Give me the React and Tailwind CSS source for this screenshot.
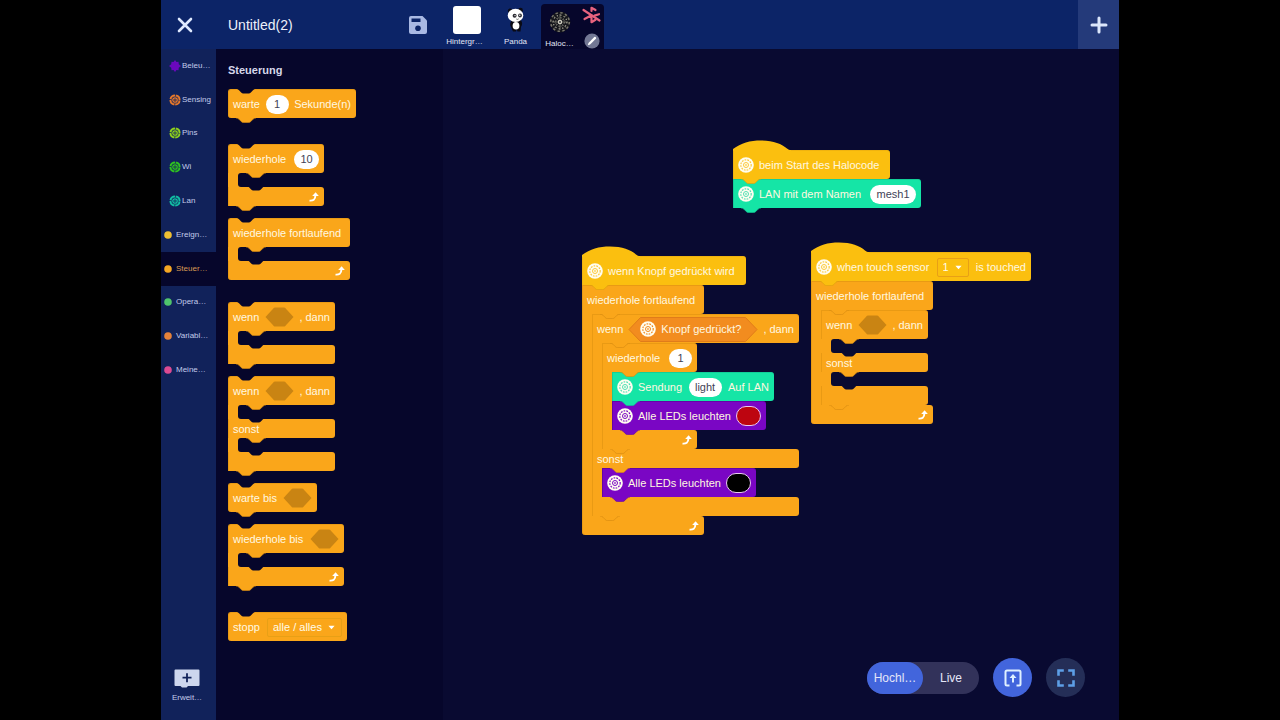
const TONES = {
  control: { bg: "bg-[#faa61a]", border: "border-[#e99a14]", fill: "fill-[#faa61a]", line: "stroke-[#d98d12]", ink: "stroke-[#faa61a]" },
  event: { bg: "bg-[#fbbf0f]", border: "border-[#f0b30f]", fill: "fill-[#fbbf0f]", line: "stroke-[#dca00f]", ink: "stroke-[#fbc93c]" },
  lan: { bg: "bg-[#15e5a6]", border: "border-[#12cf98]", fill: "fill-[#15e5a6]", line: "stroke-[#12c793]", ink: "stroke-[#4fe0b4]" },
  light: { bg: "bg-[#7a06c4]", border: "border-[#6504a6]", fill: "fill-[#7a06c4]", line: "stroke-[#6504a6]", ink: "stroke-[#7a06c4]" },
  sensing: { ink: "stroke-[#f08a1f]" },
};

const CATEGORIES = [
  { label: "Beleu…", icon: "light" },
  { label: "Sensing", icon: "chip", color: "#e8792b" },
  { label: "Pins", icon: "chip", color: "#8fd31c" },
  { label: "Wi", icon: "chip", color: "#2fc41f" },
  { label: "Lan", icon: "chip", color: "#12bfa4" },
  { label: "Ereign…", color: "#efbf32" },
  { label: "Steuer…", color: "#f5a623", active: true },
  { label: "Opera…", color: "#4fc46c" },
  { label: "Variabl…", color: "#e5823a" },
  { label: "Meine…", color: "#dc4a92" },
];

/* ---------- block parts ---------- */

const NOTCH = "M0 0C1.4 0 2.2 0.4 3 1.2L5.2 3.5C6 4.3 6.6 4.6 7.6 4.6H12.4C13.4 4.6 14 4.3 14.8 3.5L17 1.2C17.8 0.4 18.6 0 20 0";

function Bump({ tone, inner }) {
  const t = TONES[tone];
  return (
    <svg
      viewBox="0 0 20 5"
      className={`absolute top-full z-10 h-[5px] w-[20px] ${inner ? "left-[17px]" : "left-[7px]"}`}
      aria-hidden="true"
    >
      <path d={NOTCH} className={`${t.fill} ${t.line}`} strokeWidth="0.7" />
    </svg>
  );
}

function Notch({ inner, dark }) {
  return (
    <svg
      viewBox="0 0 20 5"
      className={`absolute -top-px h-[5px] w-[20px] ${dark ? "fill-[#06062b]" : "fill-[#090a31]"} ${inner ? "left-[17px]" : "left-[7px]"}`}
      aria-hidden="true"
    >
      <path d={NOTCH} />
    </svg>
  );
}

function Hat() {
  return (
    <svg viewBox="0 0 58 11" className="absolute bottom-full -left-px h-[11px] w-[58px] fill-[#fbbf0f]" aria-hidden="true">
      <path d="M0 11V9C8 3 17 0.5 28 0.5C40 0.5 49 4 54 8.5C55.5 10 56.5 10 58 10V11Z" />
    </svg>
  );
}

function LoopArrow() {
  return (
    <svg viewBox="0 0 10 10" className="size-[10px]" aria-hidden="true">
      <path d="M0.5 8.6C4 8.9 6.4 7.6 6.4 3.6" fill="none" stroke="#fff" strokeWidth="1.9" />
      <path d="M3.2 4L6.6 0.2L9.8 4Z" fill="#fff" />
    </svg>
  );
}

function ChipIcon({ tone }) {
  const ink = TONES[tone].ink;
  return (
    <svg viewBox="0 0 16 16" className="size-[16px] shrink-0" fill="none" aria-hidden="true">
      <circle cx="8" cy="8" r="7.8" fill="#fffdf0" />
      <circle cx="8" cy="8" r="5.2" className={ink} strokeWidth="1.2" strokeDasharray="1.7 1.1" />
      <circle cx="8" cy="8" r="2.5" className={ink} strokeWidth="1" />
      <circle cx="8" cy="8" r="0.6" className={ink} strokeWidth="0.8" />
    </svg>
  );
}

function Titled({ tone, children }) {
  return (
    <span className="flex items-center gap-[5px]">
      <ChipIcon tone={tone} />
      {children}
    </span>
  );
}

function Head({ tone = "control", w, hat, free, mouth, last, children }) {
  const t = TONES[tone];
  return (
    <div
      className={`relative flex h-[29px] items-center justify-between rounded-r-[3px] border-t border-l pr-[5px] pl-1 ${t.bg} ${t.border} ${w} ${free ? "rounded-tl-[3px]" : ""} ${free && !mouth ? "rounded-bl-[3px]" : ""}`}
    >
      {hat && <Hat />}
      {free && <Notch dark />}
      {children}
      {!last && <Bump tone={tone} inner={mouth} />}
    </div>
  );
}

function Mouth({ w, dark, children }) {
  if (!children) {
    return (
      <div className={`h-[14px] bg-[#faa61a] pl-[10px] ${w}`}>
        <div className={`h-full rounded-l-[3px] ${dark ? "bg-[#06062b]" : "bg-[#090a31]"}`} />
      </div>
    );
  }
  return (
    <div className="flex">
      <div className="w-[10px] shrink-0 border-l border-[#e99a14] bg-[#faa61a]" />
      <div>{children}</div>
    </div>
  );
}

function Foot({ w, loop, label, empty, dark, middle, last }) {
  return (
    <div
      className={`relative flex h-[19px] items-center rounded-r-[3px] border-l border-[#e99a14] bg-[#faa61a] pr-[5px] pl-1 ${w} ${last ? "rounded-bl-[3px]" : ""}`}
    >
      {empty && <Notch inner dark={dark} />}
      {label && <span>{label}</span>}
      {loop && <span className="ml-auto"><LoopArrow /></span>}
      {!last && <Bump tone="control" inner={middle} />}
    </div>
  );
}

function Value({ value, label, w = "w-[23px]" }) {
  return (
    <input
      type="text"
      defaultValue={value}
      aria-label={label}
      className={`h-[19px] rounded-full bg-white text-center text-[#3f3f56] outline-none ${w}`}
    />
  );
}

function Choice({ options, label, w }) {
  return (
    <span className={`relative h-[19px] ${w}`}>
      <select
        aria-label={label}
        className="block h-full w-full appearance-none rounded-[2px] border border-[#e8a016] bg-transparent pl-[5px] text-[#fffbe8] outline-none"
      >
        {options.map((o) => (
          <option key={o}>{o}</option>
        ))}
      </select>
      <svg viewBox="0 0 8 5" className="pointer-events-none absolute top-[7px] right-[7px] h-[5px] w-[7px]" aria-hidden="true">
        <path d="M0.5 0.5H7.5L4 4.5Z" fill="#fff" />
      </svg>
    </span>
  );
}

function Slot() {
  return (
    <svg viewBox="0 0 29 20" className="h-[20px] w-[29px] fill-[#c98413]" aria-hidden="true">
      <path d="M0.5 10L9 0.8Q9.5 0.5 10 0.5H19Q19.5 0.5 20 0.8L28.5 10L20 19.2Q19.5 19.5 19 19.5H10Q9.5 19.5 9 19.2Z" />
    </svg>
  );
}

function Led({ color }) {
  return (
    <button
      type="button"
      aria-label="Farbe"
      className={`h-[20px] w-[25px] rounded-full border border-[#e9c9f2] ${color}`}
    />
  );
}

/* ---------- composed blocks ---------- */

function WennSonst({ free }) {
  const w = "w-[107px]";
  return (
    <div>
      <Head w={w} free={free} mouth>
        <span>wenn</span><Slot /><span>, dann</span>
      </Head>
      <Mouth w={w} dark={free} />
      <Foot w={w} dark={free} empty middle label="sonst" />
      <Mouth w={w} dark={free} />
      <Foot w={w} dark={free} empty last={false} />
    </div>
  );
}

function Leuchten({ color }) {
  return (
    <Head tone="light" w="w-[154px]">
      <Titled tone="light">Alle LEDs leuchten</Titled>
      <Led color={color} />
    </Head>
  );
}

function Palette() {
  return (
    <section className="w-[227px] shrink-0 bg-[#06062b] pl-3">
      <h2 className="pt-[14px] text-[11px] leading-[14px] font-bold text-[#d5d7ea]">Steuerung</h2>
      <div className="pt-3 text-[11px] leading-[14px] text-[#fff8e0]">
        <Head w="w-[128px]" free>
          <span>warte</span>
          <Value value="1" label="Sekunden" />
          <span>Sekunde(n)</span>
        </Head>

        <div className="mt-[26px]">
          <Head w="w-[96px]" free mouth>
            <span>wiederhole</span>
            <Value value="10" label="Anzahl" w="w-[25px]" />
          </Head>
          <Mouth w="w-[96px]" dark />
          <Foot w="w-[96px]" dark empty loop />
        </div>

        <div className="mt-3">
          <Head w="w-[122px]" free mouth><span>wiederhole fortlaufend</span></Head>
          <Mouth w="w-[122px]" dark />
          <Foot w="w-[122px]" dark empty loop last />
        </div>

        <div className="mt-[22px]">
          <Head w="w-[107px]" free mouth>
            <span>wenn</span><Slot /><span>, dann</span>
          </Head>
          <Mouth w="w-[107px]" dark />
          <Foot w="w-[107px]" dark empty />
        </div>

        <div className="mt-3"><WennSonst free /></div>

        <div className="mt-3">
          <Head w="w-[89px]" free><span>warte bis</span><Slot /></Head>
        </div>

        <div className="mt-3">
          <Head w="w-[116px]" free mouth><span>wiederhole bis</span><Slot /></Head>
          <Mouth w="w-[116px]" dark />
          <Foot w="w-[116px]" dark empty loop />
        </div>

        <div className="mt-[26px]">
          <Head w="w-[119px]" free last>
            <span>stopp</span>
            <Choice label="stopp" options={["alle / alles", "dieses Skript"]} w="w-[75px]" />
          </Head>
        </div>
      </div>
    </section>
  );
}

function Workspace() {
  return (
    <section className="relative flex-1 bg-[#090a31] text-[11px] leading-[14px] text-[#fff8e0]">
      {/* scripts lying on the free canvas */}
      <div className="absolute top-[101px] left-[290px]">
        <Head tone="event" w="w-[157px]" hat>
          <Titled tone="event">beim Start des Halocode</Titled>
        </Head>
        <Head tone="lan" w="w-[188px]">
          <Titled tone="lan">LAN mit dem Namen</Titled>
          <Value value="mesh1" label="Name" w="w-[46px]" />
        </Head>
      </div>

      <div className="absolute top-[207px] left-[139px]">
        <Head tone="event" w="w-[164px]" hat>
          <Titled tone="event">wenn Knopf gedrückt wird</Titled>
        </Head>
        <Head w="w-[122px]" mouth><span>wiederhole fortlaufend</span></Head>
        <Mouth>
          <Head w="w-[207px]" mouth>
            <span>wenn</span>
            <span className="relative flex h-[25px] w-[130px] items-center px-3">
              <svg viewBox="0 0 130 25" className="absolute inset-0 size-full" aria-hidden="true">
                <path d="M1 12.5L12.5 0.5H117.5L129 12.5L117.5 24.5H12.5Z" fill="#f28c1f" stroke="#e07c1a" />
              </svg>
              <span className="relative"><Titled tone="sensing">Knopf gedrückt?</Titled></span>
            </span>
            <span>, dann</span>
          </Head>
          <Mouth>
            <Head w="w-[95px]" mouth>
              <span>wiederhole</span>
              <Value value="1" label="Anzahl" />
            </Head>
            <Mouth>
              <Head tone="lan" w="w-[162px]">
                <Titled tone="lan">Sendung</Titled>
                <Value value="light" label="Nachricht" w="w-[33px]" />
                <span>Auf LAN</span>
              </Head>
              <Leuchten color="bg-[#bd0510]" />
            </Mouth>
            <Foot w="w-[95px]" loop />
          </Mouth>
          <Foot w="w-[207px]" label="sonst" middle />
          <Mouth><Leuchten color="bg-black" /></Mouth>
          <Foot w="w-[207px]" />
        </Mouth>
        <Foot w="w-[122px]" loop last />
      </div>

      <div className="absolute top-[203px] left-[368px]">
        <Head tone="event" w="w-[220px]" hat>
          <Titled tone="event">when touch sensor</Titled>
          <Choice label="touch sensor" options={["1", "2", "3", "4"]} w="w-[32px]" />
          <span>is touched</span>
        </Head>
        <Head w="w-[122px]" mouth><span>wiederhole fortlaufend</span></Head>
        <Mouth><WennSonst /></Mouth>
        <Foot w="w-[122px]" loop last />
      </div>

      <div className="absolute right-[34px] bottom-[23px] flex items-center gap-[14px]">
        <div className="flex h-8 w-[112px] rounded-full bg-[#32325a] text-[12px] text-[#e4e6f8]">
          <button type="button" className="w-14 rounded-full bg-[#4265dc]">Hochl…</button>
          <button type="button" className="w-14">Live</button>
        </div>
        <button type="button" aria-label="Hochladen" className="flex size-[39px] items-center justify-center rounded-full bg-[#4265dc]">
          <svg viewBox="0 0 18 18" className="size-[18px]" fill="none" stroke="#dff0ff" strokeWidth="2">
            <path d="M5.5 16.5H3Q1.5 16.5 1.5 15V3Q1.5 1.5 3 1.5H15Q16.5 1.5 16.5 3V15Q16.5 16.5 15 16.5H12.5" />
            <path d="M9 13.5V7" />
            <path d="M5.5 9L9 5L12.5 9Z" fill="#dff0ff" stroke="none" />
          </svg>
        </button>
        <button type="button" aria-label="Vollbild" className="flex size-[39px] items-center justify-center rounded-full bg-[#242e57]">
          <svg viewBox="0 0 18 18" className="size-[18px]" fill="none" stroke="#5d9fe6" strokeWidth="2.6">
            <path d="M6.8 1.5H1.5V6.8M11.2 1.5H16.5V6.8M6.8 16.5H1.5V11.2M11.2 16.5H16.5V11.2" />
          </svg>
        </button>
      </div>
    </section>
  );
}

/* ---------- side and top bars ---------- */

function CategoryIcon({ icon, color }) {
  if (icon === "light") {
    return (
      <svg viewBox="0 0 12 12" className="size-[12px] shrink-0" fill="#6a08bd" aria-hidden="true">
        <path d="M6 0L7.5 2L9.5 1.8L9.8 4.2L12 6L9.8 7.8L9.5 10.2L7.5 10L6 12L4.5 10L2.5 10.2L2.2 7.8L0 6L2.2 4.2L2.5 1.8L4.5 2Z" />
      </svg>
    );
  }
  if (icon === "chip") {
    return (
      <svg viewBox="0 0 12 12" className="size-[12px] shrink-0" fill="none" stroke={color} aria-hidden="true">
        <circle cx="6" cy="6" r="4.7" strokeWidth="1.7" strokeDasharray="6.4 1" strokeDashoffset="-0.5" />
        <circle cx="6" cy="6" r="4" strokeWidth="0.5" />
        <circle cx="6" cy="6" r="2.2" strokeWidth="1.3" />
        <circle cx="6" cy="6" r="0.5" strokeWidth="0.6" />
      </svg>
    );
  }
  return (
    <svg viewBox="0 0 8 8" className="size-[8px] shrink-0" aria-hidden="true">
      <circle cx="4" cy="4" r="3.8" fill={color} />
    </svg>
  );
}

function Sidebar() {
  return (
    <nav className="flex w-[55px] shrink-0 flex-col bg-[#11225a] text-[8px] leading-[10px] text-[#c3cbea]" aria-label="Kategorien">
      <ul className="grid h-[338px] grid-rows-10">
        {CATEGORIES.map((c) => (
          <li key={c.label}>
            <button
              type="button"
              className={`flex h-full w-full items-center whitespace-nowrap ${c.icon ? "gap-px pl-2" : "gap-1 pl-[3px]"} ${c.active ? "bg-[#06062b] text-[#d99b54]" : ""}`}
            >
              <CategoryIcon icon={c.icon} color={c.color} />
              {c.label}
            </button>
          </li>
        ))}
      </ul>
      <button type="button" className="mt-auto flex flex-col items-center gap-[5px] pr-[3px] pb-[17px]">
        <svg viewBox="0 0 26 19" className="h-[19px] w-[26px]" aria-hidden="true">
          <path d="M1.5 0.5H24.5Q25.5 0.5 25.5 1.5V16Q25.5 17 24.5 17H14L12.5 18.5H8L6.5 17H1.5Q0.5 17 0.5 16V1.5Q0.5 0.5 1.5 0.5Z" fill="#cdd6ee" />
          <path d="M13 4.2V13.2M8.5 8.7H17.5" stroke="#11225a" strokeWidth="1.8" />
        </svg>
        Erweit…
      </button>
    </nav>
  );
}

function Panda() {
  return (
    <svg viewBox="0 0 20 26" className="h-[26px] w-[20px]" aria-hidden="true">
      <circle cx="4.2" cy="3.8" r="2.4" fill="#0a0a14" />
      <circle cx="14.5" cy="3.2" r="2.4" fill="#0a0a14" />
      <path d="M6 13Q3 17 5 20L7 24.5H10L10.5 22L11.5 24.5H14.5L15 20Q17.5 16 14.5 13Z" fill="#0a0a14" />
      <ellipse cx="10" cy="18.8" rx="3.4" ry="3.8" fill="#fff" />
      <ellipse cx="9.5" cy="8.4" rx="7.8" ry="6.6" fill="#fff" />
      <ellipse cx="8.6" cy="8.8" rx="2" ry="2" fill="#2c2c33" />
      <ellipse cx="14" cy="8.4" rx="1.9" ry="2" fill="#2c2c33" />
      <circle cx="9" cy="8.6" r="0.7" fill="#fff" />
      <circle cx="13.8" cy="8.2" r="0.7" fill="#fff" />
      <path d="M10.3 12Q11.5 12.9 12.7 11.8" stroke="#333" strokeWidth="0.7" fill="none" />
    </svg>
  );
}

function HaloBoard() {
  return (
    <svg viewBox="0 0 22 22" className="size-[22px]" fill="none" aria-hidden="true">
      <circle cx="11" cy="11" r="10.4" fill="#15161c" />
      <circle cx="11" cy="11" r="9.3" stroke="#77756c" strokeWidth="1.6" strokeDasharray="2.4 2.47" />
      <circle cx="11" cy="11" r="6.8" stroke="#a29f92" strokeWidth="1.3" strokeDasharray="1.3 2.26" />
      <circle cx="11" cy="11" r="4.4" stroke="#6b6a63" strokeWidth="1" strokeDasharray="2 1.4" />
      <path d="M11 3V19M3 11H19" stroke="#7b7a70" strokeWidth="0.9" />
      <path d="M5.3 5.3L16.7 16.7M16.7 5.3L5.3 16.7" stroke="#4e4e4b" strokeWidth="0.9" />
      <circle cx="11" cy="11" r="2.2" fill="#d2d0c4" />
      <circle cx="11" cy="11" r="0.9" fill="#2a2a30" />
    </svg>
  );
}

function TopBar() {
  return (
    <header className="flex h-[49px] bg-[#0c2467] text-white">
      <div className="flex w-[278px] shrink-0 items-center pr-3">
        <button type="button" aria-label="Schließen" className="flex w-[47px] justify-center">
          <svg viewBox="0 0 16 16" className="size-[16px]" fill="none" stroke="#dfe9ff" strokeWidth="2.6" strokeLinecap="round">
            <path d="M2 2L14 14M14 2L2 14" />
          </svg>
        </button>
        <h1 className="pl-5 text-[14px] leading-[18px] text-[#eef1fb]">Untitled(2)</h1>
        <button type="button" aria-label="Speichern" className="ml-auto">
          <svg viewBox="0 0 18 18" className="size-[18px]" aria-hidden="true">
            <path d="M2 0H13.5L18 4.5V16Q18 18 16 18H2Q0 18 0 16V2Q0 0 2 0Z" fill="#a9b9e4" />
            <path d="M2.5 2.5H11.5V6H2.5Z" fill="#0c2467" />
            <circle cx="9" cy="12.3" r="2.8" fill="#0c2467" />
          </svg>
        </button>
      </div>
      <div className="flex text-[8px] leading-[10px] text-[#e2e6f6]">
        <button type="button" className="flex w-[51px] flex-col items-center gap-[3px] pt-[6px]">
          <span className="ml-1 size-[28px] rounded-[3px] bg-white" />
          Hintergr…
        </button>
        <button type="button" className="flex w-[51px] flex-col items-center gap-[4px] pt-[7px]">
          <Panda />
          Panda
        </button>
        <div className="mt-1 flex w-[63px] rounded-t-[4px] bg-[#06062b]">
          <button type="button" className="flex w-[38px] flex-col items-center gap-[6px] pt-[7px] pr-px">
            <HaloBoard />
            Haloc…
          </button>
          <div className="flex flex-1 flex-col items-center justify-between pt-[2px]">
            <button type="button" aria-label="Bluetooth getrennt">
              <svg viewBox="0 0 19 18" className="h-[18px] w-[19px]" fill="none" stroke="#e8637f" strokeWidth="2.2" strokeLinecap="round" strokeLinejoin="round" aria-hidden="true">
                <path d="M1.5 4L17.5 14.5" />
                <path d="M9.5 5V1.8L13.5 4" />
                <path d="M2.5 13L9.5 9.3V16.2L13.5 13.8" />
                <path d="M12.5 9.6L17 8.2" />
              </svg>
            </button>
            <button type="button" aria-label="Bearbeiten">
              <svg viewBox="0 0 16 16" className="size-[16px]" aria-hidden="true">
                <circle cx="8" cy="8" r="7.6" fill="#737894" />
                <path d="M3.8 12.2L4.5 9.9L10.3 4.1Q11.1 3.5 11.8 4.2Q12.5 4.9 11.9 5.7L6.1 11.5Z" fill="#fff" />
              </svg>
            </button>
          </div>
        </div>
      </div>
      <button type="button" aria-label="Hinzufügen" className="ml-auto flex w-[41px] items-center justify-center bg-[#243a7a]">
        <svg viewBox="0 0 18 18" className="size-[18px]" fill="none" stroke="#dbe6fb" strokeWidth="3" strokeLinecap="round">
          <path d="M9 2V16M2 9H16" />
        </svg>
      </button>
    </header>
  );
}

export default function App() {
  return (
    <div className="min-h-screen bg-black font-['Liberation_Sans',Arial,sans-serif]">
      <main className="mx-auto flex min-h-screen w-full max-w-[958px] flex-col">
        <TopBar />
        <div className="flex flex-1">
          <Sidebar />
          <Palette />
          <Workspace />
        </div>
      </main>
    </div>
  );
}
